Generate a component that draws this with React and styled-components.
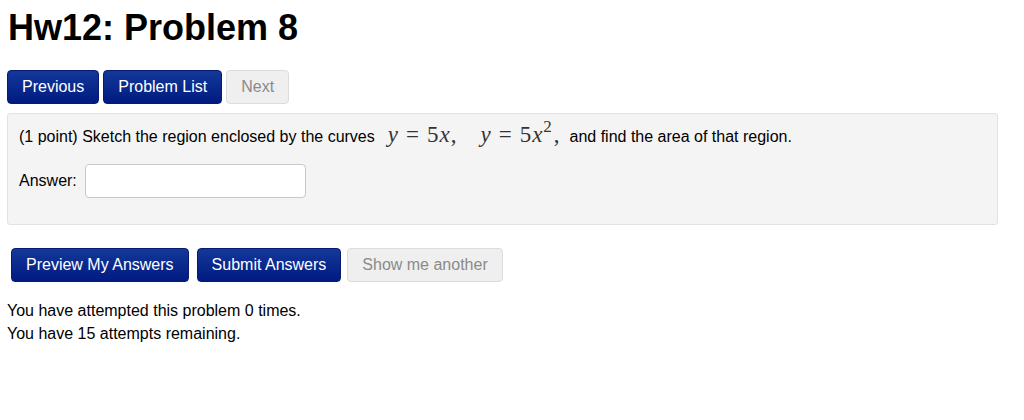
import React from 'react';
import styled, { createGlobalStyle } from 'styled-components';

const Global = createGlobalStyle`
    body {
        margin: 0;
        background: #fff;
        font-family: "Liberation Sans", Arial, sans-serif;
        color: #000;
    }
`;

const Page = styled.div`
    padding: 8px 7px;
`;

const Title = styled.h1`
    margin: 0;
    padding-left: 1px;
    font-size: 36px;
    font-weight: bold;
    line-height: 40px;
`;

const Nav = styled.div`
    display: flex;
    gap: 4px;
    margin-top: 22px;
`;

const Button = styled.button`
    font-family: "Liberation Sans", Arial, sans-serif;
    font-size: 16px;
    height: 34px;
    padding: 0 14px;
    border-radius: 4px;
    cursor: pointer;
    color: #fff;
    border: 1px solid #061a70;
    background: linear-gradient(#14389a, #001a80);
    &:disabled {
        color: #8a8a8a;
        border-color: #dcdcdc;
        background: #efefef;
        cursor: default;
    }
`;

const Box = styled.div`
    margin: 9px 19px 0 0;
    background: #f4f4f4;
    border: 1px solid #e2e2e2;
    border-radius: 3px;
    height: 112px;
    padding: 8px 11px;
    box-sizing: border-box;
    font-size: 16px;
`;

const Question = styled.p`
    margin: 0;
    display: flex;
    align-items: baseline;
    height: 26px;
    white-space: pre;
`;

const Math = styled.span`
    font-family: "Liberation Serif", "Times New Roman", serif;
    font-size: 23px;
    color: #333;
    letter-spacing: 1px;
    margin: ${(p) => p.$gap || '0'};
    white-space: pre;
    i { font-style: italic; }
    sup { font-size: 17px; vertical-align: 10px; line-height: 0; margin-right: 1px; }
`;

const Op = styled.span`
    margin: 0 7px;
`;

const AnswerRow = styled.div`
    display: flex;
    align-items: center;
    gap: 8px;
    margin-top: 16px;
`;

const Input = styled.input`
    width: 221px;
    height: 34px;
    box-sizing: border-box;
    border: 1px solid #c8c8c8;
    border-radius: 4px;
    background: #fff;
`;

const Actions = styled.div`
    display: flex;
    gap: 6px;
    margin-top: 23px;
    padding-left: 4px;
    & > button:nth-child(2) { margin-left: 2px; }
`;

const Info = styled.div`
    margin-top: 17px;
    font-size: 16px;
    line-height: 23px;
`;

export default function App() {
    return (
        <Page>
            <Global />
            <Title>Hw12: Problem 8</Title>
            <Nav>
                <Button>Previous</Button>
                <Button>Problem List</Button>
                <Button disabled>Next</Button>
            </Nav>
            <Box>
                <Question>
                    (1 point) Sketch the region enclosed by the curves
                    <Math $gap="0 0 0 13px"><i>y</i><Op>=</Op>5<i>x</i>,</Math>
                    <Math $gap="0 0 0 23px"><i>y</i><Op>=</Op>5<i>x</i><sup>2</sup>,</Math>
                    {'  and find the area of that region.'}
                </Question>
                <AnswerRow>
                    Answer:
                    <Input />
                </AnswerRow>
            </Box>
            <Actions>
                <Button>Preview My Answers</Button>
                <Button>Submit Answers</Button>
                <Button disabled>Show me another</Button>
            </Actions>
            <Info>
                You have attempted this problem 0 times.
                <br />
                You have 15 attempts remaining.
            </Info>
        </Page>
    );
}
